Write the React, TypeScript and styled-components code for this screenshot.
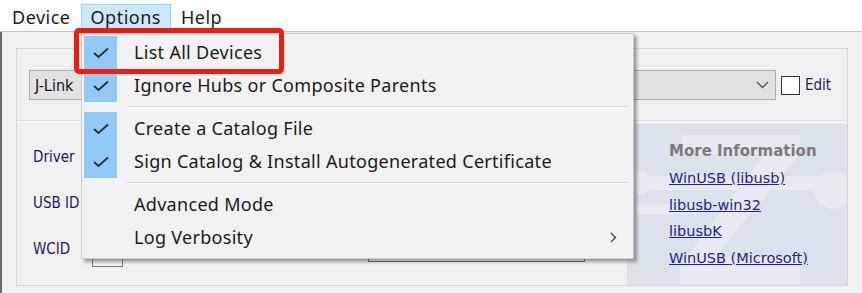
import React from "react";
import styled, { createGlobalStyle } from "styled-components";

const GlobalStyle = createGlobalStyle`
  html, body {
    margin: 0;
    padding: 0;
    background: #f0f0f0;
  }
  body {
    width: 862px;
    height: 293px;
    overflow: hidden;
    font-family: "Noto Sans", sans-serif;
  }
`;

const Frame = styled.div`
  position: relative;
  width: 862px;
  height: 293px;
  overflow: hidden;
  background: #f0f0f0;
`;

const MenuBar = styled.div`
  height: 32px;
  box-sizing: border-box;
  background: #ffffff;
  border-bottom: 1px solid #c4c4c4;
  display: flex;
  align-items: stretch;
  padding: 4px 0 0 2px;
`;

const MenuTitle = styled.div<{ $active?: boolean }>`
  display: flex;
  align-items: center;
  padding: 0 9px 2px;
  border: 1px solid ${(p) => (p.$active ? "#99d1ff" : "transparent")};
  border-bottom: none;
  background: ${(p) => (p.$active ? "#cce8ff" : "transparent")};
  font-size: 18px;
  letter-spacing: 0.5px;
  color: #1a1a1a;
`;

const Body = styled.div`
  height: 261px;
  box-sizing: border-box;
  border-left: 2px solid #6a6a6a;
  padding: 16px 14px 0 14px;
`;

const GroupBox = styled.div`
  height: 238px;
  box-sizing: border-box;
  border: 1px solid #d6d6d6;
  display: flex;
  flex-direction: column;
`;

const TopRow = styled.div`
  display: flex;
  align-items: center;
  padding: 21px 0 0 12px;
`;

const Combo = styled.div`
  width: 747px;
  height: 30px;
  box-sizing: border-box;
  border: 1px solid #adadad;
  background: #e1e1e1;
  display: flex;
  align-items: center;
  justify-content: space-between;
  padding: 0 6px 0 5px;
  font-family: "DejaVu Sans Condensed", "DejaVu Sans", sans-serif;
  font-size: 16px;
  color: #111;
`;

const CheckBox = styled.div`
  width: 19px;
  height: 19px;
  box-sizing: border-box;
  margin-left: 5px;
  border: 1px solid #333;
  background: #fff;
`;

const EditLabel = styled.span`
  margin-left: 5px;
  font-family: "DejaVu Sans Condensed", "DejaVu Sans", sans-serif;
  font-size: 15px;
  color: #1c1c60;
`;

const Separator = styled.div`
  height: 1px;
  margin-top: 20px;
  background: #dcdcdc;
  border-bottom: 1px solid #fafafa;
`;

const Lower = styled.div`
  flex: 1;
  display: flex;
  padding-top: 2px;
`;

const Fields = styled.div`
  flex: 1;
  display: flex;
  flex-direction: column;
  gap: 22px;
  padding: 21px 0 0 16px;
`;

const FieldRow = styled.div`
  height: 24px;
  display: flex;
  align-items: flex-start;
`;

const FieldLabel = styled.span`
  width: 59px;
  line-height: 24px;
  font-family: "DejaVu Sans Condensed", "DejaVu Sans", sans-serif;
  font-size: 15px;
  color: #1c1c5a;
`;

const SmallBox = styled.div<{ $w: number; $ml: number; $h: number }>`
  width: ${(p) => p.$w}px;
  height: ${(p) => p.$h}px;
  margin-left: ${(p) => p.$ml}px;
  margin-top: 4px;
  box-sizing: border-box;
  border: 1px solid #7a7a7a;
  background: #f0f0f0;
`;

const InfoPanel = styled.div`
  position: relative;
  width: 220px;
  height: 161px;
  background: #dce2eb;
  overflow: hidden;
`;

const Watermark = styled.svg`
  position: absolute;
  inset: 0;
`;

const InfoList = styled.div`
  position: relative;
  display: flex;
  flex-direction: column;
  gap: 8px;
  padding: 18px 0 0 42px;
  font-family: "DejaVu Sans", sans-serif;
`;

const InfoTitle = styled.div`
  font-weight: bold;
  font-size: 15px;
  color: #7b7b7b;
  line-height: 18px;
  margin-bottom: 1px;
`;

const InfoLink = styled.a`
  font-size: 14.5px;
  line-height: 18.5px;
  color: #22229a;
  text-decoration: underline;
`;

const Menu = styled.div`
  position: absolute;
  left: 81px;
  top: 33px;
  width: 553px;
  height: 226px;
  box-sizing: border-box;
  border: 1px solid #cccccc;
  background: #f2f2f2;
  box-shadow: 3px 3px 3px rgba(0, 0, 0, 0.35);
  padding: 2px 0 0 0;
`;

const MenuItem = styled.div`
  height: 33px;
  display: flex;
  align-items: center;
  font-size: 18px;
  letter-spacing: 0.3px;
  color: #1a1a1a;
`;

const CheckCell = styled.div<{ $on?: boolean }>`
  width: 33px;
  height: 100%;
  margin: 0 17px 0 2px;
  background: ${(p) => (p.$on ? "#91c9f7" : "transparent")};
  display: flex;
  align-items: center;
  justify-content: center;
`;

const ItemText = styled.span`
  flex: 1;
  padding-bottom: 1px;
`;

const SubArrow = styled.svg`
  margin-right: 16px;
`;

const MenuSep = styled.div`
  height: 1px;
  margin: 4px 5px 4px 45px;
  background: #d7d7d7;
  border-bottom: 1px solid #fbfbfb;
`;

const Callout = styled.div`
  position: absolute;
  left: 74px;
  top: 28px;
  width: 210px;
  height: 46px;
  box-sizing: border-box;
  border: 5px solid #f2190f;
  border-radius: 5px;
`;

function Check() {
  return (
    <svg width="18" height="12" viewBox="0 0 18 12">
      <polyline points="2,6 6.5,10 16,1.5" fill="none" stroke="#2d2d2d" strokeWidth="1.8" />
    </svg>
  );
}

const items: { label?: string; checked?: boolean; sub?: boolean; sep?: boolean }[] = [
  { label: "List All Devices", checked: true },
  { label: "Ignore Hubs or Composite Parents", checked: true },
  { sep: true },
  { label: "Create a Catalog File", checked: true },
  { label: "Sign Catalog & Install Autogenerated Certificate", checked: true },
  { sep: true },
  { label: "Advanced Mode" },
  { label: "Log Verbosity", sub: true },
];

export default function App() {
  return (
    <Frame>
      <GlobalStyle />
      <MenuBar>
        <MenuTitle>Device</MenuTitle>
        <MenuTitle $active>Options</MenuTitle>
        <MenuTitle>Help</MenuTitle>
      </MenuBar>
      <Body>
        <GroupBox>
          <TopRow>
            <Combo>
              <span>J-Link</span>
              <svg width="13" height="8" viewBox="0 0 13 8">
                <polyline points="1,1 6.5,6.5 12,1" fill="none" stroke="#555" strokeWidth="1.3" />
              </svg>
            </Combo>
            <CheckBox />
            <EditLabel>Edit</EditLabel>
          </TopRow>
          <Separator />
          <Lower>
            <Fields>
              <FieldRow>
                <FieldLabel>Driver</FieldLabel>
              </FieldRow>
              <FieldRow>
                <FieldLabel>USB ID</FieldLabel>
              </FieldRow>
              <FieldRow>
                <FieldLabel>WCID</FieldLabel>
                <SmallBox $w={31} $ml={0} $h={26} />
                <SmallBox $w={217} $ml={245} $h={21} />
              </FieldRow>
            </Fields>
            <InfoPanel>
              <Watermark width="220" height="161" viewBox="0 0 220 161">
                <g fill="#e7ebf1">
                  <polygon points="55,11 173,11 173,30 88,133 173,133 173,161 53,161 53,142 138,30 55,30" />
                  <rect x="0" y="52" width="205" height="14" />
                  <circle cx="12" cy="59" r="12" />
                  <circle cx="206" cy="66" r="19" />
                  <rect x="10" y="80" width="60" height="10" />
                </g>
              </Watermark>
              <InfoList>
                <InfoTitle>More Information</InfoTitle>
                <InfoLink>WinUSB (libusb)</InfoLink>
                <InfoLink>libusb-win32</InfoLink>
                <InfoLink>libusbK</InfoLink>
                <InfoLink>WinUSB (Microsoft)</InfoLink>
              </InfoList>
            </InfoPanel>
          </Lower>
        </GroupBox>
      </Body>
      <Menu>
        {items.map((it, i) =>
          it.sep ? (
            <MenuSep key={i} />
          ) : (
            <MenuItem key={i}>
              <CheckCell $on={it.checked}>{it.checked && <Check />}</CheckCell>
              <ItemText>{it.label}</ItemText>
              {it.sub && (
                <SubArrow width="7" height="11" viewBox="0 0 7 11">
                  <polyline points="1,1 5.5,5.5 1,10" fill="none" stroke="#444" strokeWidth="1.4" />
                </SubArrow>
              )}
            </MenuItem>
          )
        )}
      </Menu>
      <Callout />
    </Frame>
  );
}
